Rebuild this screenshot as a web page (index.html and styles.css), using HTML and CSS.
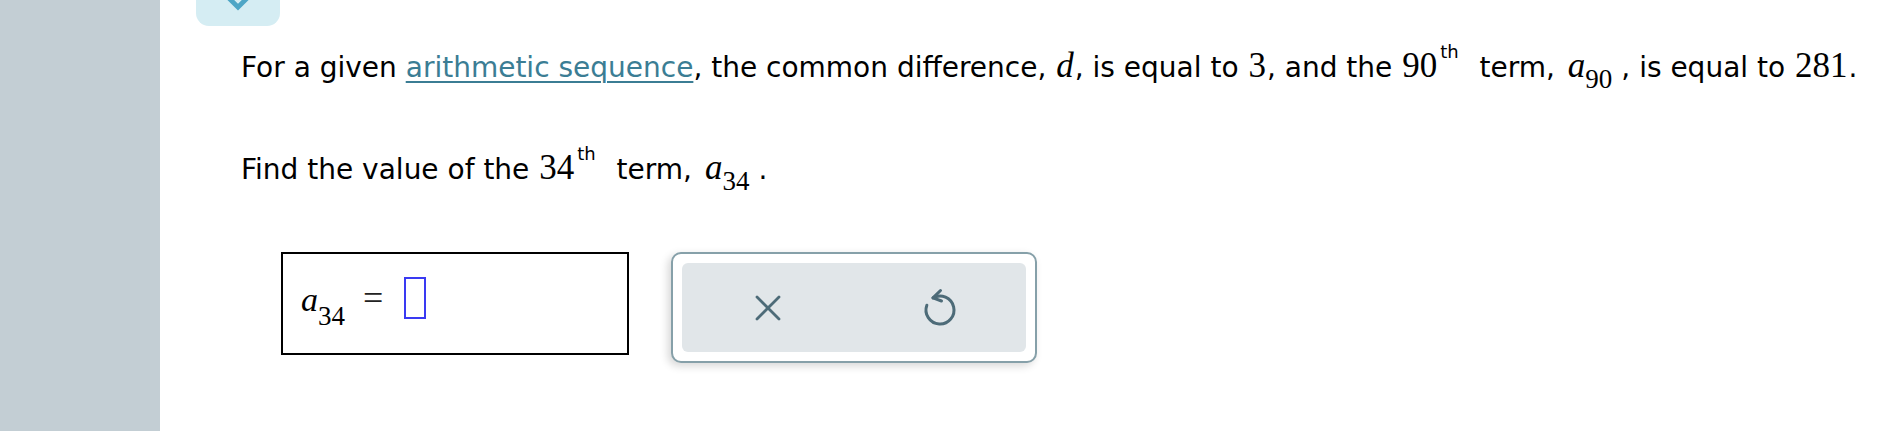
FILE: index.html
```html
<!DOCTYPE html>
<html lang="en">
<head>
<meta charset="utf-8">
<title>Arithmetic sequence</title>
<link rel="stylesheet" href="styles.css">
</head>
<body>
<div class="page">
  <aside class="sidebar"></aside>
  <main class="content">
    <div class="top-btn">
      <svg class="chev" width="84" height="26" viewBox="0 0 84 26" aria-hidden="true">
        <polyline points="30,-4.8 42,7.2 54,-4.8" fill="none" stroke="#4ea6c6" stroke-width="4.8" stroke-linejoin="miter"/>
      </svg>
    </div>
    <div class="question">
      <p class="line line1">For a given <a class="link" href="#">arithmetic sequence</a>, the common difference, <span class="m"><i>d</i></span>, is equal to <span class="m">3</span>, and the <span class="m">90</span><sup class="ord">th</sup> term, <span class="m var"><i>a</i><sub>90</sub></span>, is equal to <span class="m">281</span>.</p>
      <p class="line line2">Find the value of the <span class="m">34</span><sup class="ord">th</sup> term, <span class="m var"><i>a</i><sub>34</sub></span>.</p>
    </div>
    <div class="answer-row">
      <div class="answer-box">
        <span class="ans-var"><i>a</i><sub>34</sub></span>
        <span class="ans-eq">=</span>
        <span class="blank"></span>
      </div>
      <div class="tools">
        <div class="tools-inner">
          <button class="tool" type="button" aria-label="Clear">
            <svg width="26" height="26" viewBox="0 0 26 26">
              <path d="M2 2 L24 24 M24 2 L2 24" fill="none" stroke="#4d6b78" stroke-width="2.8" stroke-linecap="round"/>
            </svg>
          </button>
          <button class="tool" type="button" aria-label="Reset">
            <svg width="38" height="42" viewBox="0 0 38 42">
              <path d="M5.84 18.2 A14 14 0 1 0 12 10.88" fill="none" stroke="#4d6b78" stroke-width="3" stroke-linecap="round"/>
              <polyline points="19.5,3.5 12,10.88 20.5,14" fill="none" stroke="#4d6b78" stroke-width="3" stroke-linecap="round" stroke-linejoin="round"/>
            </svg>
          </button>
        </div>
      </div>
    </div>
  </main>
</div>
</body>
</html>
```

FILE: styles.css
```css
html, body {
  margin: 0;
  padding: 0;
  background: #ffffff;
}

.page {
  display: flex;
  min-height: 100vh;
}

.sidebar {
  width: 160px;
  flex: 0 0 160px;
  background: #c3ced4;
}

.content {
  flex: 1;
  display: flex;
  flex-direction: column;
  align-items: flex-start;
  font-family: "DejaVu Sans", Verdana, sans-serif;
  font-size: 28px;
  color: #000;
}

.top-btn {
  margin-left: 36px;
  width: 84px;
  height: 26px;
  background: #d5edf3;
  border-radius: 0 0 13px 13px;
  overflow: hidden;
}

.chev {
  display: block;
}

.question {
  margin-left: 81px;
  margin-top: 20px;
}

.line {
  margin: 0;
  line-height: 40px;
  white-space: nowrap;
}

.line2 {
  margin-top: 60px;
}

.link {
  color: #3b7d94;
  text-decoration: underline;
  text-decoration-thickness: 2px;
  text-underline-offset: 4px;
}

.m {
  font-family: "Liberation Serif", "Times New Roman", serif;
  font-size: 35px;
  margin: 0 1px;
}

.m.var {
  margin-left: 4px;
}

.m i,
.ans-var i {
  font-style: italic;
}

.ord {
  font-family: "DejaVu Sans", Verdana, sans-serif;
  font-size: 18px;
  line-height: 0;
  vertical-align: 19px;
  margin-left: 2px;
  margin-right: 12px;
}

.var sub {
  font-size: 27px;
  line-height: 0;
  vertical-align: -11px;
  margin-right: 8px;
}

.answer-row {
  margin-left: 121px;
  margin-top: 62px;
  display: flex;
  align-items: flex-start;
}

.answer-box {
  box-sizing: border-box;
  width: 348px;
  height: 103px;
  border: 2px solid #000;
  display: flex;
  align-items: flex-start;
  padding: 23px 0 0 18px;
  font-family: "Liberation Serif", "Times New Roman", serif;
}

.ans-var {
  font-size: 34px;
  line-height: 40px;
  margin-top: 3px;
}

.ans-var sub {
  font-size: 27px;
  line-height: 0;
  vertical-align: -14px;
}

.ans-eq {
  font-size: 36px;
  line-height: 40px;
  margin-top: 1px;
  margin-left: 18px;
  color: #222;
}

.blank {
  box-sizing: border-box;
  width: 22px;
  height: 42px;
  border: 2px solid #3a3af2;
  margin-left: 21px;
}

.tools {
  box-sizing: border-box;
  margin-left: 42px;
  width: 366px;
  height: 111px;
  border: 2px solid #86a0a9;
  border-radius: 10px;
  padding: 9px;
  background: #fff;
  box-shadow: -3px 3px 9px rgba(0, 0, 0, 0.16);
}

.tools-inner {
  display: flex;
  height: 100%;
  background: #e1e6e9;
  border-radius: 6px;
}

.tool {
  flex: 1;
  display: flex;
  align-items: center;
  justify-content: center;
  border: 0;
  padding: 0;
  background: transparent;
}

.tool svg {
  display: block;
}
```
